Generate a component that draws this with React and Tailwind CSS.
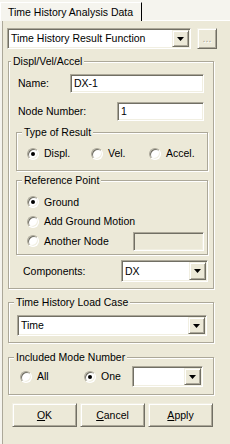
import React from "react";

const sunken =
  "bg-white border border-t-[#ACA899] border-l-[#ACA899] border-r-white border-b-white shadow-[inset_1px_1px_0_#716F64,inset_-1px_-1px_0_#F1EFE2]";
const raised =
  "bg-[#ECE9D8] border border-t-[#F1EFE2] border-l-[#F1EFE2] border-r-[#716F64] border-b-[#716F64] shadow-[inset_1px_1px_0_#fff,inset_-1px_-1px_0_#ACA899]";

const Arrow = () => (
  <svg width="7" height="4" viewBox="0 0 7 4">
    <polygon points="0,0 7,0 3.5,4" fill="#000" />
  </svg>
);

const Combo = ({ value, className }) => (
  <div className={`flex ${sunken} ${className}`}>
    <div className="flex-1 flex items-center pl-[3px] whitespace-nowrap overflow-hidden">{value}</div>
    <div className={`w-[17px] m-[1px] flex items-center justify-center ${raised}`}>
      <Arrow />
    </div>
  </div>
);

const TextBox = ({ value, className }) => (
  <div className={`flex items-center pl-[3px] ${sunken} ${className}`}>{value}</div>
);

const Radio = ({ checked, label }) => (
  <div className="flex items-center gap-[5px]">
    <span
      className={`w-[12px] h-[12px] rounded-full flex items-center justify-center ${sunken}`}
    >
      {checked && <span className="w-[4px] h-[4px] rounded-full bg-black" />}
    </span>
    <span>{label}</span>
  </div>
);

const GroupBox = ({ title, left = "left-[5px]", className, children }) => (
  <div
    className={`relative border border-[#ACA899] shadow-[inset_1px_1px_0_#fff,1px_1px_0_#fff] ${className}`}
  >
    <span className={`absolute ${left} -top-[7px] px-[2px] bg-[#ECE9D8] leading-[13px] whitespace-nowrap`}>
      {title}
    </span>
    {children}
  </div>
);

const Button = ({ children }) => (
  <button className={`w-[65px] h-[24px] flex items-center justify-center ${raised}`}>
    {children}
  </button>
);

export default function App() {
  return (
    <div className="w-[230px] h-[444px] bg-[#ECE9D8] flex flex-col overflow-hidden font-['Liberation_Sans',Arial,sans-serif] text-[10.5px] leading-[13px] text-black">
      {/* tab strip */}
      <div className="flex h-[21px] shrink-0 bg-[#F5F4EE]">
        <div className="mt-[2px] w-[142px] h-[19px] border-l border-t border-white border-r border-r-black pl-[7px] pt-[3px] whitespace-nowrap">
          Time History Analysis Data
        </div>
        <div className="flex-1 border-b border-white" />
      </div>

      <div className="flex-1 flex flex-col pl-[7px] pt-[7px] shadow-[inset_2px_0_0_#F5F4EE,inset_3px_0_0_#ACA899]">
        <div className="flex h-[21px]">
          <Combo value="Time History Result Function" className="w-[184px] h-[21px]" />
          <button
            disabled
            className={`ml-[6px] w-[20px] h-[21px] flex items-center justify-center text-[#ACA899] [text-shadow:1px_1px_0_#fff] ${raised}`}
          >
            ...
          </button>
        </div>

        <GroupBox
          title="Displ/Vel/Accel"
          left="left-[2px]"
          className="mt-[12px] ml-[1px] w-[206px] pl-[7px] pr-[5px] flex flex-col"
        >
          <div className="mt-[12px] h-[19px] flex items-center pl-[2px] pr-[4px]">
            <span>Name:</span>
            <TextBox value="DX-1" className="ml-auto w-[134px] h-[19px]" />
          </div>
          <div className="mt-[9px] h-[19px] flex items-center pl-[2px] pr-[4px]">
            <span>Node Number:</span>
            <TextBox value="1" className="ml-auto w-[87px] h-[19px]" />
          </div>

          <GroupBox title="Type of Result" className="mt-[11px] h-[39px]">
            <div className="flex items-center h-full pl-[10px] pt-[4px]">
              <div className="w-[64px]">
                <Radio checked label="Displ." />
              </div>
              <div className="w-[58px]">
                <Radio label="Vel." />
              </div>
              <Radio label="Accel." />
            </div>
          </GroupBox>

          <GroupBox title="Reference Point" className="mt-[9px] pt-[11px] pb-[3px] pl-[10px] pr-[3px]">
            <div className="h-[20px] flex items-center">
              <Radio checked label="Ground" />
            </div>
            <div className="h-[19px] flex items-center">
              <Radio label="Add Ground Motion" />
            </div>
            <div className="h-[20px] flex items-center">
              <Radio label="Another Node" />
              <div className={`ml-auto w-[71px] h-[19px] bg-[#ECE9D8] border border-t-[#ACA899] border-l-[#ACA899] border-r-white border-b-white shadow-[inset_1px_1px_0_#716F64,inset_-1px_-1px_0_#F1EFE2]`} />
            </div>
          </GroupBox>

          <div className="mt-[5px] mb-[6px] h-[22px] flex items-center pl-[7px]">
            <span>Components:</span>
            <Combo value="DX" className="ml-auto w-[87px] h-[22px]" />
          </div>
        </GroupBox>

        <GroupBox
          title="Time History Load Case"
          className="mt-[13px] ml-[1px] w-[206px] pt-[12px] pb-[6px] pl-[8px] pr-[6px]"
        >
          <Combo value="Time" className="h-[21px]" />
        </GroupBox>

        <GroupBox
          title="Included Mode Number"
          className="mt-[14px] ml-[1px] w-[206px] pt-[8px] pb-[7px] pl-[11px]"
        >
          <div className="flex items-center h-[21px]">
            <div className="w-[64px]">
              <Radio label="All" />
            </div>
            <div className="w-[48px]">
              <Radio checked label="One" />
            </div>
            <Combo value="" className="w-[71px] h-[21px]" />
          </div>
        </GroupBox>

        <div className="mt-[8px] ml-[5px] flex gap-[3px]">
          <Button>
            <u>O</u>K
          </Button>
          <Button>
            <u>C</u>ancel
          </Button>
          <Button>
            <u>A</u>pply
          </Button>
        </div>
      </div>
    </div>
  );
}
